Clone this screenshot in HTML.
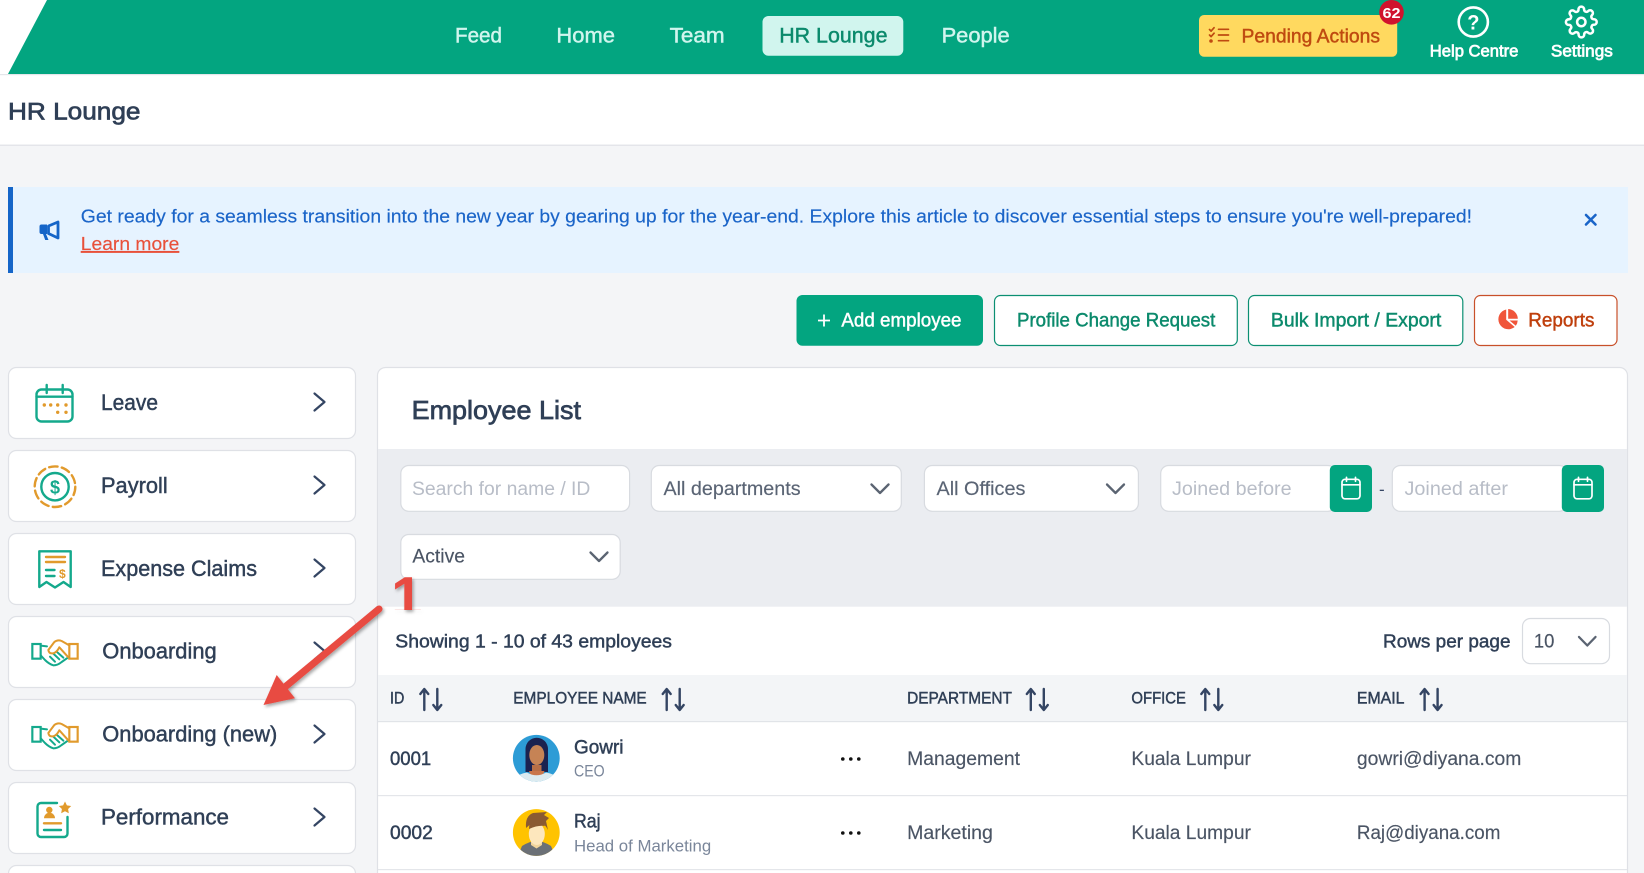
<!DOCTYPE html>
<html lang="en"><head><meta charset="utf-8"><title>HR Lounge</title>
<style>
html,body{margin:0;padding:0;background:#f4f5f7;width:1644px;height:873px;overflow:hidden}
svg{display:block}
text{font-family:"Liberation Sans",Arial,sans-serif;white-space:pre}
.r{stroke:currentColor;stroke-width:.15px;paint-order:stroke}
.m{stroke:currentColor;stroke-width:.45px;paint-order:stroke}
.s{stroke:currentColor;stroke-width:.7px;paint-order:stroke}
.box{fill:#fff;stroke:#d8dbe0;stroke-width:1.2}
.card{fill:#fff;stroke:#dfe1e6;stroke-width:1.2}
.chev{fill:none;stroke:#344563;stroke-width:2.2;stroke-linecap:round;stroke-linejoin:round}
.dd{fill:none;stroke:#5b6472;stroke-width:2.3;stroke-linecap:round;stroke-linejoin:round}
.g{fill:none;stroke:#14a98c;stroke-width:2.4;stroke-linecap:round;stroke-linejoin:round}
.o{fill:none;stroke:#e19a2c;stroke-width:2.4;stroke-linecap:round;stroke-linejoin:round}
.sort{fill:none;stroke:#344563;stroke-width:2.4;stroke-linecap:round;stroke-linejoin:round}
.wht{fill:none;stroke:#fff;stroke-width:1.7;stroke-linecap:round;stroke-linejoin:round}
</style></head>
<body>
<svg xmlns="http://www.w3.org/2000/svg" width="1644" height="873" viewBox="0 0 1644 873">
<defs>
<filter id="sh" x="-20%" y="-20%" width="140%" height="140%"><feDropShadow dx="1.5" dy="2" stdDeviation="1.6" flood-color="#000" flood-opacity=".35"/></filter>
<clipPath id="av1"><circle cx="536.3" cy="758.3" r="23.4"/></clipPath>
<clipPath id="av2"><circle cx="536.3" cy="832.5" r="23.4"/></clipPath>
<clipPath id="one"><rect x="385" y="570" width="40" height="40"/></clipPath>
<g id="hs" transform="translate(25 630) scale(.3333)">
<rect x="22" y="42" width="25" height="44" fill="none" stroke="#14a98c" stroke-width="6.500"/>
<rect x="133" y="42" width="25" height="44" fill="none" stroke="#e19a2c" stroke-width="6.500"/>
<path d="M47 47L66 49M47 76L60 90Q72 102 85 106Q98 106 110 96L130 82M75 80L90 95M85 71L103 88M96 66L115 83" fill="none" stroke="#14a98c" stroke-width="6" stroke-linejoin="round" stroke-linecap="round"/>
<path d="M133 46L110 33Q98 28 88 36L70 60Q72 72 84 70Q95 68 103 52L130 82" fill="none" stroke="#e19a2c" stroke-width="6" stroke-linejoin="round" stroke-linecap="round"/>
</g>
<g id="cal"><rect x="-9" y="-9" width="18" height="19.500" rx="3" class="wht"/><path d="M-9 -3.500H9M-4.500-11V-7M4.500-11V-7" class="wht"/></g>
<g id="sa"><path d="M0 21.500V1M-4 5.500L0 .5L4 5.500M13 .5V21M9 16.500L13 21.500L17 16.500" class="sort"/></g>
</defs>

<rect width="1644" height="873" fill="#f4f5f7"/>

<!-- top bar -->
<rect x="0" y="0" width="1644" height="145" fill="#fff"/>
<path d="M47 0H1644V74H8Z" fill="#03a580"/>
<rect x="0" y="74" width="1644" height="1.200" fill="#e4e6ea"/>
<rect x="0" y="144.600" width="1644" height="1.200" fill="#dfe1e6"/>
<text x="455" y="42.700" font-size="21.500" textLength="47" lengthAdjust="spacingAndGlyphs" fill="#d1f5ee" color="#d1f5ee" class="m">Feed</text>
<text x="556.400" y="42.700" font-size="21.500" textLength="58.600" lengthAdjust="spacingAndGlyphs" fill="#d1f5ee" color="#d1f5ee" class="m">Home</text>
<text x="669.600" y="42.700" font-size="21.500" textLength="55.100" lengthAdjust="spacingAndGlyphs" fill="#d1f5ee" color="#d1f5ee" class="m">Team</text>
<rect x="762.500" y="16" width="140.800" height="39.700" rx="6" fill="#d1f5ee"/>
<text x="779.200" y="42.700" font-size="21.500" textLength="108.300" lengthAdjust="spacingAndGlyphs" fill="#0b8a6c" color="#0b8a6c" class="m">HR Lounge</text>
<text x="941.600" y="42.700" font-size="21.500" textLength="68.100" lengthAdjust="spacingAndGlyphs" fill="#d1f5ee" color="#d1f5ee" class="m">People</text>

<rect x="1199" y="15" width="198.200" height="41.700" rx="5" fill="#ffd95f"/>
<path d="M1209.500 29.500l1.600 1.600 3-3.400M1209.500 35l1.600 1.600 3-3.400M1218.500 29.300h10M1218.500 35h10M1218.500 40.700h10" fill="none" stroke="#bf4a10" stroke-width="1.700" stroke-linecap="round" stroke-linejoin="round"/>
<circle cx="1211" cy="41" r="1.800" fill="#bf4a10"/>
<text x="1241.500" y="42.700" font-size="19.500" textLength="138.500" lengthAdjust="spacingAndGlyphs" fill="#bf4a10" color="#bf4a10" class="m">Pending Actions</text>
<circle cx="1391.500" cy="12.300" r="12.300" fill="#d0122d"/>
<text x="1382.500" y="17.800" font-size="15" font-weight="700" textLength="18" lengthAdjust="spacingAndGlyphs" fill="#fff">62</text>

<circle cx="1473.300" cy="22" r="14.600" fill="none" stroke="#fff" stroke-width="2.600"/>
<text x="1467.200" y="29.500" font-size="21" font-weight="700" textLength="12.200" lengthAdjust="spacingAndGlyphs" fill="#fff">?</text>
<text x="1429.800" y="56.700" font-size="16.500" textLength="88.600" lengthAdjust="spacingAndGlyphs" fill="#fff" color="#fff" class="s">Help Centre</text>
<g transform="translate(1564.500 5.200) scale(1.400)" fill="none" stroke="#fff" stroke-width="1.800" stroke-linecap="round" stroke-linejoin="round">
<circle cx="12" cy="12" r="3"/>
<path d="M19.400 15a1.650 1.650 0 0 0 .33 1.820l.06.06a2 2 0 0 1 0 2.830 2 2 0 0 1-2.830 0l-.06-.06a1.650 1.650 0 0 0-1.820-.33 1.650 1.650 0 0 0-1 1.510V21a2 2 0 0 1-2 2 2 2 0 0 1-2-2v-.09A1.650 1.650 0 0 0 9 19.400a1.650 1.650 0 0 0-1.820.33l-.06.06a2 2 0 0 1-2.830 0 2 2 0 0 1 0-2.830l.06-.06a1.650 1.650 0 0 0 .33-1.820 1.650 1.650 0 0 0-1.510-1H3a2 2 0 0 1-2-2 2 2 0 0 1 2-2h.09A1.650 1.650 0 0 0 4.600 9a1.650 1.650 0 0 0-.33-1.820l-.06-.06a2 2 0 0 1 0-2.830 2 2 0 0 1 2.830 0l.06.06a1.650 1.650 0 0 0 1.820.33H9a1.650 1.650 0 0 0 1-1.510V3a2 2 0 0 1 2-2 2 2 0 0 1 2 2v.09a1.650 1.650 0 0 0 1 1.510 1.650 1.650 0 0 0 1.820-.33l.06-.06a2 2 0 0 1 2.830 0 2 2 0 0 1 0 2.830l-.06.06a1.650 1.650 0 0 0-.33 1.820V9a1.650 1.650 0 0 0 1.510 1H21a2 2 0 0 1 2 2 2 2 0 0 1-2 2h-.09a1.650 1.650 0 0 0-1.510 1z"/>
</g>
<text x="1550.900" y="56.700" font-size="16.500" textLength="61.900" lengthAdjust="spacingAndGlyphs" fill="#fff" color="#fff" class="s">Settings</text>

<text x="8" y="119.300" font-size="24.500" textLength="132.500" lengthAdjust="spacingAndGlyphs" fill="#2f3f56" color="#2f3f56" class="s">HR Lounge</text>

<!-- banner -->
<rect x="8" y="187" width="1620" height="86" fill="#e6f3ff"/>
<rect x="8" y="187" width="5" height="86" fill="#1565c8"/>
<path d="M39.500 226.500a2 2 0 0 1 2-2H47v9.500h-5.500a2 2 0 0 1-2-2ZM43 234l3 0 2.500 6h-3.300Z" fill="#1565c8"/>
<path d="M48.500 226L58 222V238L48.500 233.500Z" fill="none" stroke="#1565c8" stroke-width="2.800" stroke-linejoin="round"/>
<text x="80.800" y="222.700" font-size="18.500" textLength="1391.200" lengthAdjust="spacingAndGlyphs" fill="#1a64c8" color="#1a64c8" class="r">Get ready for a seamless transition into the new year by gearing up for the year-end. Explore this article to discover essential steps to ensure you're well-prepared!</text>
<text x="80.800" y="250" font-size="18.500" textLength="98.500" lengthAdjust="spacingAndGlyphs" fill="#e8503a" color="#e8503a" class="r" text-decoration="underline">Learn more</text>
<path d="M1586 215L1595.500 224.500M1595.500 215L1586 224.500" stroke="#1a64c8" stroke-width="2.600" stroke-linecap="round"/>

<!-- action buttons -->
<rect x="796.500" y="295" width="186.500" height="50.700" rx="6" fill="#03a580"/>
<path d="M818 320.500H830M824 314.500V326.500" stroke="#fff" stroke-width="1.800"/>
<text x="841.400" y="326.700" font-size="19.500" textLength="120.100" lengthAdjust="spacingAndGlyphs" fill="#fff" color="#fff" class="m">Add employee</text>
<rect x="994.500" y="295.500" width="242.800" height="50" rx="6" fill="#fff" stroke="#0b8f72" stroke-width="1.200"/>
<text x="1017" y="326.700" font-size="19.500" textLength="198.300" lengthAdjust="spacingAndGlyphs" fill="#0b8a6c" color="#0b8a6c" class="m">Profile Change Request</text>
<rect x="1248.500" y="295.500" width="214.300" height="50" rx="6" fill="#fff" stroke="#0b8f72" stroke-width="1.200"/>
<text x="1270.900" y="326.700" font-size="19.500" textLength="170.400" lengthAdjust="spacingAndGlyphs" fill="#0b8a6c" color="#0b8a6c" class="m">Bulk Import / Export</text>
<rect x="1474.500" y="295.500" width="142.500" height="50" rx="6" fill="#fff" stroke="#c8502a" stroke-width="1.200"/>
<path d="M1506.200 309.500A10 10 0 1 0 1514.700 327L1506.200 319.800Z" fill="#f0553a"/>
<path d="M1508.200 309A10 10 0 0 1 1517.800 318.800H1508.200Z" fill="#f0553a"/>
<path d="M1509.500 320.500H1517.700A10 10 0 0 1 1515.800 325.800Z" fill="#f0553a"/>
<text x="1528.300" y="326.700" font-size="19.500" textLength="66.100" lengthAdjust="spacingAndGlyphs" fill="#bf3f0c" color="#bf3f0c" class="m">Reports</text>

<!-- left nav cards -->
<rect x="8.500" y="367.500" width="347" height="71" rx="8" class="card"/>
<rect x="8.500" y="450.500" width="347" height="71" rx="8" class="card"/>
<rect x="8.500" y="533.500" width="347" height="71" rx="8" class="card"/>
<rect x="8.500" y="616.500" width="347" height="71" rx="8" class="card"/>
<rect x="8.500" y="699.500" width="347" height="71" rx="8" class="card"/>
<rect x="8.500" y="782.500" width="347" height="71" rx="8" class="card"/>
<rect x="8.500" y="865.500" width="347" height="40" rx="8" class="card"/>

<text x="101" y="410" font-size="22" textLength="57" lengthAdjust="spacingAndGlyphs" fill="#2f3f56" color="#2f3f56" class="m">Leave</text>
<text x="101" y="493" font-size="22" textLength="66.700" lengthAdjust="spacingAndGlyphs" fill="#2f3f56" color="#2f3f56" class="m">Payroll</text>
<text x="101" y="576" font-size="22" textLength="156" lengthAdjust="spacingAndGlyphs" fill="#2f3f56" color="#2f3f56" class="m">Expense Claims</text>
<text x="102.300" y="658.500" font-size="22" textLength="114.400" lengthAdjust="spacingAndGlyphs" fill="#2f3f56" color="#2f3f56" class="m">Onboarding</text>
<text x="102.300" y="741.700" font-size="22" textLength="175" lengthAdjust="spacingAndGlyphs" fill="#2f3f56" color="#2f3f56" class="m">Onboarding (new)</text>
<text x="101" y="824.700" font-size="22" textLength="128" lengthAdjust="spacingAndGlyphs" fill="#2f3f56" color="#2f3f56" class="m">Performance</text>

<path d="M314.500 393.500L324.500 402L314.500 410.500" class="chev"/>
<path d="M314.500 476.500L324.500 485L314.500 493.500" class="chev"/>
<path d="M314.500 559.500L324.500 568L314.500 576.500" class="chev"/>
<path d="M314.500 642.500L324.500 651L314.500 659.500" class="chev"/>
<path d="M314.500 725.500L324.500 734L314.500 742.500" class="chev"/>
<path d="M314.500 808.500L324.500 817L314.500 825.500" class="chev"/>

<!-- leave icon -->
<rect x="36.500" y="389.500" width="36" height="32" rx="5" class="g"/>
<path d="M36.500 396.700H72.500M46.700 385V393M62.700 385V393" class="g"/>
<g fill="#e19a2c"><circle cx="44.300" cy="405" r="1.700"/><circle cx="50.700" cy="405" r="1.700"/><circle cx="57.700" cy="405" r="1.700"/><circle cx="66" cy="405" r="1.700"/><circle cx="57.700" cy="412.300" r="1.700"/><circle cx="66" cy="412.300" r="1.700"/></g>
<!-- payroll icon -->
<circle cx="55" cy="486.700" r="20.300" fill="none" stroke="#e19a2c" stroke-width="2.400" stroke-dasharray="8.500 4.300" stroke-linecap="round"/>
<circle cx="55" cy="486.700" r="13.700" class="g"/>
<text x="50" y="493.500" font-size="18" font-weight="700" fill="#14a98c">$</text>
<!-- expense icon -->
<path d="M39.300 551.300H70.700V587L63.500 582L55 587.500L46.500 582L39.300 587Z" class="g"/>
<path d="M46 557H65M46 562H65" class="o"/>
<path d="M46 570H54.500M46 576H54.500" class="g"/>
<text x="59" y="578" font-size="12" font-weight="700" fill="#e19a2c">$</text>
<!-- handshake -->
<use href="#hs"/>
<use href="#hs" transform="translate(0 83)"/>
<!-- performance icon -->
<path d="M57 803H41a3.500 3.500 0 0 0-3.500 3.500v27a3.500 3.500 0 0 0 3.500 3.500H64a3.500 3.500 0 0 0 3.500-3.500V817" class="g"/>
<circle cx="49.300" cy="810" r="3.200" fill="#e19a2c"/>
<path d="M44 818.300a5.500 5.500 0 0 1 11 0Z" fill="#e19a2c"/>
<path d="M44 823.300H61" class="o"/>
<path d="M44 830H61" class="g"/>
<path d="M65 801.500l1.900 3.900 4.300.6-3.100 3 .7 4.300-3.800-2-3.800 2 .7-4.300-3.100-3 4.300-.6Z" fill="#e19a2c"/>

<!-- main panel -->
<path d="M377.500 900V375.500a8 8 0 0 1 8-8H1619.500a8 8 0 0 1 8 8V900Z" fill="#fff" stroke="#dfe1e6" stroke-width="1.200"/>
<text x="411.600" y="419" font-size="26" textLength="169.400" lengthAdjust="spacingAndGlyphs" fill="#2f3f56" color="#2f3f56" class="s">Employee List</text>
<rect x="378" y="449" width="1249" height="157.700" fill="#ebedf1"/>

<rect x="400.800" y="465.500" width="228.800" height="45.800" rx="8" class="box"/>
<text x="412" y="495" font-size="19" textLength="178.400" lengthAdjust="spacingAndGlyphs" fill="#b8bdc7">Search for name / ID</text>
<rect x="651.300" y="465.500" width="250" height="45.800" rx="8" class="box"/>
<text x="663.500" y="495" font-size="19" textLength="137.100" lengthAdjust="spacingAndGlyphs" fill="#5a6474" color="#5a6474" class="r">All departments</text>
<path d="M871.500 484.500L880 493L888.500 484.500" class="dd"/>
<rect x="924.400" y="465.500" width="214" height="45.800" rx="8" class="box"/>
<text x="936.500" y="495" font-size="19" textLength="88.900" lengthAdjust="spacingAndGlyphs" fill="#5a6474" color="#5a6474" class="r">All Offices</text>
<path d="M1107 484.500L1115.500 493L1124 484.500" class="dd"/>

<rect x="1160.700" y="465.500" width="175" height="45.800" rx="8" class="box"/>
<text x="1172" y="495" font-size="19" textLength="119.600" lengthAdjust="spacingAndGlyphs" fill="#b8bdc7">Joined before</text>
<rect x="1329.800" y="465" width="42.200" height="47" rx="5" fill="#03a580"/>
<use href="#cal" transform="translate(1351 488.300)"/>
<text x="1379" y="495" font-size="17" fill="#344563">-</text>
<rect x="1392.300" y="465.500" width="175" height="45.800" rx="8" class="box"/>
<text x="1404.500" y="495" font-size="19" textLength="103.500" lengthAdjust="spacingAndGlyphs" fill="#b8bdc7">Joined after</text>
<rect x="1561.800" y="465" width="42.200" height="47" rx="5" fill="#03a580"/>
<use href="#cal" transform="translate(1583 488.300)"/>

<rect x="400.800" y="534.500" width="219.400" height="44.800" rx="8" class="box"/>
<text x="412.400" y="562.700" font-size="19" textLength="52.600" lengthAdjust="spacingAndGlyphs" fill="#4a5464" color="#4a5464" class="r">Active</text>
<path d="M590.500 552.500L599 561L607.500 552.500" class="dd"/>

<text x="395.300" y="647.700" font-size="18.500" textLength="276.700" lengthAdjust="spacingAndGlyphs" fill="#2f3f56" color="#2f3f56" class="m">Showing 1 - 10 of 43 employees</text>
<text x="1383" y="647.700" font-size="18.500" textLength="127.500" lengthAdjust="spacingAndGlyphs" fill="#2f3f56" color="#2f3f56" class="m">Rows per page</text>
<rect x="1522.500" y="618.500" width="87" height="45.200" rx="8" class="box"/>
<text x="1533.900" y="647.700" font-size="19" textLength="20.500" lengthAdjust="spacingAndGlyphs" fill="#4a5464" color="#4a5464" class="r">10</text>
<path d="M1579 637L1587.300 645.500L1595.500 637" class="dd"/>

<!-- table -->
<rect x="378" y="675" width="1249" height="46.700" fill="#f3f5f7"/>
<rect x="378" y="721" width="1249" height="1.200" fill="#e1e4e8"/>
<rect x="378" y="795" width="1249" height="1.200" fill="#e4e6ea"/>
<rect x="378" y="869" width="1249" height="1.200" fill="#e4e6ea"/>
<text x="390" y="703.300" font-size="16.500" textLength="14.300" lengthAdjust="spacingAndGlyphs" fill="#2f3f56" color="#2f3f56" class="m">ID</text>
<text x="513.300" y="703.300" font-size="16.500" textLength="133.400" lengthAdjust="spacingAndGlyphs" fill="#2f3f56" color="#2f3f56" class="m">EMPLOYEE NAME</text>
<text x="907.100" y="703.300" font-size="16.500" textLength="104.900" lengthAdjust="spacingAndGlyphs" fill="#2f3f56" color="#2f3f56" class="m">DEPARTMENT</text>
<text x="1131.400" y="703.300" font-size="16.500" textLength="54.600" lengthAdjust="spacingAndGlyphs" fill="#2f3f56" color="#2f3f56" class="m">OFFICE</text>
<text x="1356.900" y="703.300" font-size="16.500" textLength="47.600" lengthAdjust="spacingAndGlyphs" fill="#2f3f56" color="#2f3f56" class="m">EMAIL</text>
<use href="#sa" transform="translate(424.300 688.500)"/>
<use href="#sa" transform="translate(666.700 688.500)"/>
<use href="#sa" transform="translate(1030.800 688.500)"/>
<use href="#sa" transform="translate(1205.300 688.500)"/>
<use href="#sa" transform="translate(1424.600 688.500)"/>

<!-- row 1 -->
<text x="390" y="765" font-size="19" textLength="41.200" lengthAdjust="spacingAndGlyphs" fill="#2f3f56" color="#2f3f56" class="m">0001</text>
<g clip-path="url(#av1)">
<rect x="512" y="734" width="48" height="48" fill="#2d9cd6"/>
<path d="M525.500 772V749a11 11 0 0 1 22.500 0V772Z" fill="#1b2250"/>
<path d="M532 765h9.500v7h-9.500Z" fill="#b86f47"/>
<ellipse cx="536.800" cy="755" rx="7.500" ry="10" fill="#c68355"/>
<path d="M529 771h15.500l-2 5h-11.500Z" fill="#c9764b"/>
<path d="M512 785V780Q518 774 527 772.500Q536.500 778 546 772.500Q555 774 561 780V785Z" fill="#dcebf0"/>
</g>
<text x="574" y="753.300" font-size="19" textLength="49.500" lengthAdjust="spacingAndGlyphs" fill="#2f3f56" color="#2f3f56" class="m">Gowri</text>
<text x="574" y="776.700" font-size="16.500" textLength="30.700" lengthAdjust="spacingAndGlyphs" fill="#7a869a">CEO</text>
<circle cx="842.800" cy="759" r="1.800" fill="#111"/><circle cx="850.800" cy="759" r="1.800" fill="#111"/><circle cx="858.800" cy="759" r="1.800" fill="#111"/>
<text x="907.100" y="765" font-size="19" textLength="112.900" lengthAdjust="spacingAndGlyphs" fill="#4a5464" color="#4a5464" class="r">Management</text>
<text x="1131.400" y="765" font-size="19" textLength="119.500" lengthAdjust="spacingAndGlyphs" fill="#4a5464" color="#4a5464" class="r">Kuala Lumpur</text>
<text x="1356.900" y="765" font-size="19" textLength="164.500" lengthAdjust="spacingAndGlyphs" fill="#4a5464" color="#4a5464" class="r">gowri@diyana.com</text>

<!-- row 2 -->
<text x="390" y="839" font-size="19" textLength="42.800" lengthAdjust="spacingAndGlyphs" fill="#2f3f56" color="#2f3f56" class="m">0002</text>
<g clip-path="url(#av2)">
<rect x="512" y="808" width="48" height="49" fill="#ffc300"/>
<path d="M522 846Q530 841 536.500 841Q543 841 551 846L556 858H517Z" fill="#6b7076"/>
<path d="M531 838h11v7l-5.500 3.500-5.500-3.500Z" fill="#f2d59c"/>
<path d="M526 828Q525 816 533 813L547 812L544 815L549 818L546 821L548 830Q543 820 533 822Z" fill="#8a5a32"/>
<ellipse cx="536.800" cy="834" rx="8" ry="11" fill="#fde7bd"/>
<path d="M533 820Q541 818 545 826Q538 825 529 829Q529 822 533 820Z" fill="#8a5a32"/>
</g>
<text x="574" y="827.300" font-size="19" textLength="26.600" lengthAdjust="spacingAndGlyphs" fill="#2f3f56" color="#2f3f56" class="m">Raj</text>
<text x="574" y="851.300" font-size="16.500" textLength="137.200" lengthAdjust="spacingAndGlyphs" fill="#7a869a">Head of Marketing</text>
<circle cx="842.800" cy="833" r="1.800" fill="#111"/><circle cx="850.800" cy="833" r="1.800" fill="#111"/><circle cx="858.800" cy="833" r="1.800" fill="#111"/>
<text x="907.100" y="839" font-size="19" textLength="85.800" lengthAdjust="spacingAndGlyphs" fill="#4a5464" color="#4a5464" class="r">Marketing</text>
<text x="1131.400" y="839" font-size="19" textLength="119.500" lengthAdjust="spacingAndGlyphs" fill="#4a5464" color="#4a5464" class="r">Kuala Lumpur</text>
<text x="1356.900" y="839" font-size="19" textLength="143.500" lengthAdjust="spacingAndGlyphs" fill="#4a5464" color="#4a5464" class="r">Raj@diyana.com</text>

<!-- annotation -->
<g filter="url(#sh)">
<path d="M379 609L285 687" stroke="#e84c43" stroke-width="7" stroke-linecap="round" fill="none"/>
<path d="M276.700 675L295 698.300L263.500 705Z" fill="#e84c43"/>
<g clip-path="url(#one)"><text x="391.300" y="615.600" font-size="56" font-weight="700" fill="#e84c43">1</text></g>
</g>
</svg>
</body></html>
